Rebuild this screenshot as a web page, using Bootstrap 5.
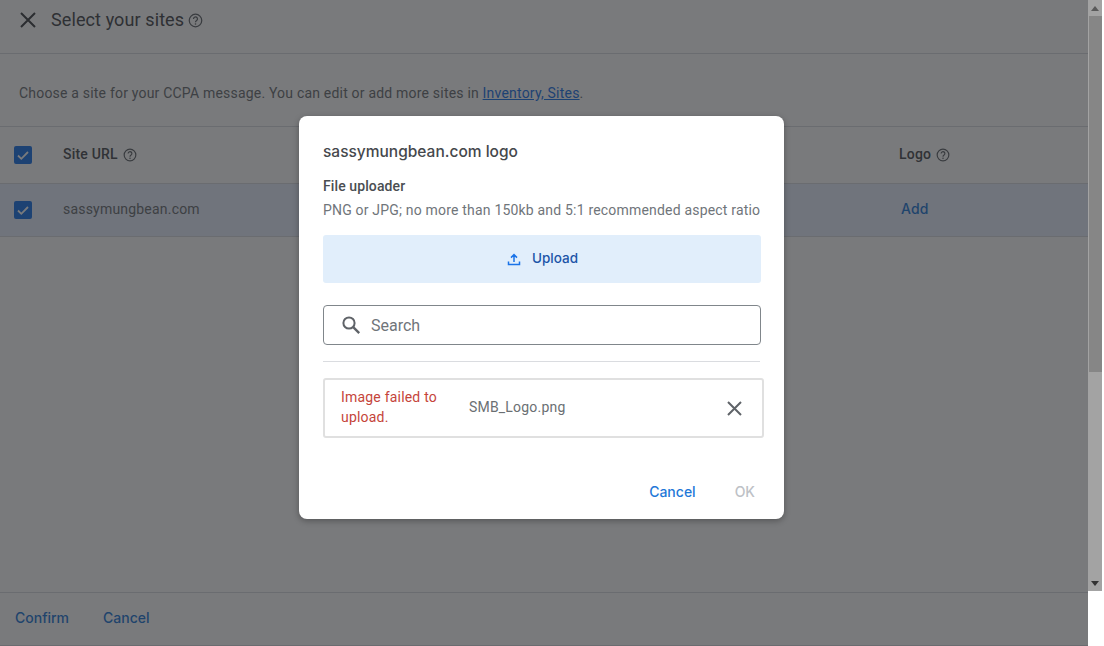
<!DOCTYPE html>
<html lang="en">
<head>
<meta charset="utf-8">
<title>Select your sites</title>
<link href="https://cdn.jsdelivr.net/npm/bootstrap@5.3.0/dist/css/bootstrap.min.css" rel="stylesheet">
<style>
html,body{height:100%;overflow:hidden;background:#fff}
body{font-family:Roboto,"Liberation Sans",sans-serif;color:#3c4043;font-size:14px}
.shell{width:1104px;height:646px}
.pagecol{width:1088px;height:646px;position:relative;background:#fff}
.barcol{width:14px;height:591px;background:#a3a3a3}
.bar-btn{height:16px;color:#3c3c3c}
.bar-thumb{height:356px;background:#868686;margin-left:1px;margin-right:0}
.bar-fill{flex:1 1 auto}
.head-bar{height:54px;border-bottom:1px solid #dadce0;padding-left:20px;padding-bottom:13px}
.head-title{font-size:18px;margin-left:15px;margin-right:4px;color:#45484c;line-height:24px;letter-spacing:.1px}
.intro{height:73px;border-bottom:1px solid #dadce0;padding-left:19px;letter-spacing:.2px;color:#6b6f73;padding-top:7px}
.intro a{color:#1a73e8}
.site-table{table-layout:fixed;width:1088px;margin:0}
.site-table th,.site-table td{border-bottom:1px solid #dadce0;padding:0;vertical-align:middle;color:#6b6f73;font-weight:400;letter-spacing:.2px;box-shadow:none}
.site-table th{height:56px;font-weight:500;color:#4a4d51}
.site-table td{height:53px}
.site-table tr.picked td{--bs-table-bg:#e8f0fe;background:#e8f0fe}
.col-check{width:63px}.col-logo{width:189px}
.help-gap{gap:5px}
.tick{width:18px;height:18px;background:#1a73e8;border-radius:2px;margin-left:14px;display:block}
.add-link,.act-link{color:#1f78d8;font-family:Inter,Roboto,sans-serif;font-size:14px;font-weight:500;text-decoration:none}
.add-link{margin-left:2px;display:inline-block;margin-bottom:2px}
.filler{flex:1 1 auto}
.foot-bar{height:54px;border-top:1px solid #dadce0;padding-left:15px;gap:34px;padding-bottom:3px;border-bottom:1px solid #dadce0}
.scrim{position:absolute;inset:0;background:rgba(32,33,36,.6);padding:116px 0 0 299px}
.dlg{width:485px;height:403px;border:0;border-radius:8px;padding:24px 24px 17px;background:#fff;box-shadow:0 2px 6px rgba(0,0,0,.3)}
.dlg-title{font-family:Inter,Roboto,sans-serif;font-size:15.5px;font-weight:500;line-height:22px;color:#45484c;margin:1px 0 13px}
.dlg-label{font-weight:500;line-height:20px;color:#4a4d51;letter-spacing:.1px}
.dlg-hint{line-height:20px;color:#70757a;letter-spacing:.19px;margin-top:4px;white-space:nowrap}
.up-box{width:438px;height:48px;background:#e1eefb;border:0;border-radius:3px;margin-top:15px;gap:10px;color:#1c55a8;font-weight:500;font-family:Inter,Roboto,sans-serif;font-size:13.5px}
.up-label{margin-bottom:2px}
.find-box{width:438px;height:40px;border:1px solid #80868b;border-radius:4px;margin-top:22px;padding-left:17px;gap:10px}
.find-box input{border:0;outline:0;padding:2px 0 0;flex:1 1 auto;font-size:16px;color:#5f6368;background:transparent;min-width:0}
.find-box input::placeholder{color:#70757a;opacity:1}
.dlg-rule{width:437px;height:1px;background:#dadce0;margin-top:16px}
.file-row{width:441px;height:60px;border:2px solid #e0e0e0;border-radius:3px;margin-top:16px;padding-left:16px;padding-right:20px}
.file-err{width:128px;line-height:20px;color:#c5443a;letter-spacing:.2px;margin-top:-2px}
.file-name{color:#6b6f73;letter-spacing:.2px;margin-top:-2px}
.dlg-foot{margin-top:auto;gap:39px;padding-right:5px;line-height:20px}
.act-off{color:#bdc1c6;font-family:Inter,Roboto,sans-serif;font-size:14px;font-weight:500}
</style>
</head>
<body>
<div class="shell d-flex align-items-start">
  <div class="pagecol d-flex flex-column">
    <header class="head-bar d-flex align-items-center">
      <svg width="16" height="16" viewBox="0 0 16 16" aria-hidden="true"><path d="M1 1l14 14M15 1L1 15" stroke="#3c4043" stroke-width="2" fill="none"/></svg>
      <span class="head-title">Select your sites</span>
      <svg width="15" height="15" viewBox="0 0 24 24" aria-hidden="true"><use href="#qmark"/></svg>
    </header>
    <div class="intro d-flex align-items-center"><span>Choose a site for your CCPA message. You can edit or add more sites in <a href="#">Inventory, Sites</a>.</span></div>
    <table class="table site-table">
      <thead><tr>
        <th class="col-check"><svg class="tick" viewBox="0 0 18 18" aria-hidden="true"><path d="M4 9.5l3.3 3.3L14 6" stroke="#fff" stroke-width="1.8" fill="none"/></svg></th>
        <th><span class="d-inline-flex align-items-center help-gap">Site URL <svg width="14" height="14" viewBox="0 0 24 24" aria-hidden="true"><use href="#qmark"/></svg></span></th>
        <th class="col-logo"><span class="d-inline-flex align-items-center help-gap">Logo <svg width="14" height="14" viewBox="0 0 24 24" aria-hidden="true"><use href="#qmark"/></svg></span></th>
      </tr></thead>
      <tbody><tr class="picked">
        <td><svg class="tick" viewBox="0 0 18 18" aria-hidden="true"><path d="M4 9.5l3.3 3.3L14 6" stroke="#fff" stroke-width="1.8" fill="none"/></svg></td>
        <td>sassymungbean.com</td>
        <td><a href="#" class="add-link">Add</a></td>
      </tr></tbody>
    </table>
    <div class="filler"></div>
    <footer class="foot-bar d-flex align-items-center">
      <a href="#" class="act-link">Confirm</a>
      <a href="#" class="act-link">Cancel</a>
    </footer>
    <div class="scrim">
      <div class="modal-content dlg d-flex flex-column">
        <h2 class="dlg-title">sassymungbean.com logo</h2>
        <div class="dlg-label">File uploader</div>
        <div class="dlg-hint">PNG or JPG; no more than 150kb and 5:1 recommended aspect ratio</div>
        <button type="button" class="btn up-box d-flex align-items-center justify-content-center">
          <svg width="16" height="16" viewBox="0 0 16 16" aria-hidden="true"><path d="M8 11V4M5 6.6L8 3.6l3 3M2.5 10.5v3h11v-3" stroke="#1a73e8" stroke-width="1.5" fill="none"/></svg>
          <span class="up-label">Upload</span>
        </button>
        <div class="find-box d-flex align-items-center">
          <svg width="20" height="20" viewBox="0 0 20 20" aria-hidden="true"><circle cx="8" cy="8" r="5.6" stroke="#5f6368" stroke-width="2" fill="none"/><path d="M12.2 12.2l6 6" stroke="#5f6368" stroke-width="2.4" fill="none"/></svg>
          <input type="text" placeholder="Search" aria-label="Search">
        </div>
        <div class="dlg-rule"></div>
        <div class="file-row d-flex align-items-center">
          <div class="file-err">Image failed to upload.</div>
          <div class="file-name flex-grow-1">SMB_Logo.png</div>
          <svg width="15" height="15" viewBox="0 0 15 15" aria-hidden="true"><path d="M1 1l13 13M14 1L1 14" stroke="#5f6368" stroke-width="2" fill="none"/></svg>
        </div>
        <div class="dlg-foot d-flex justify-content-end">
          <a href="#" class="act-link">Cancel</a>
          <span class="act-off">OK</span>
        </div>
      </div>
    </div>
  </div>
  <div class="barcol d-flex flex-column">
    <div class="bar-btn d-flex align-items-center justify-content-center"><svg width="8" height="5" viewBox="0 0 8 5" aria-hidden="true"><path d="M4 0l4 5H0z" fill="#5a5a5a"/></svg></div>
    <div class="bar-thumb"></div>
    <div class="bar-fill"></div>
    <div class="bar-btn d-flex align-items-center justify-content-center"><svg width="8" height="5" viewBox="0 0 8 5" aria-hidden="true"><path d="M0 0h8L4 5z" fill="#333"/></svg></div>
  </div>
</div>
<svg width="0" height="0" class="d-block" aria-hidden="true"><defs><g id="qmark"><circle cx="12" cy="12" r="10" stroke="#5f6368" stroke-width="2" fill="none"/><path d="M8.8 9.5a3.2 3.2 0 1 1 5 2.6c-1.2.8-1.8 1.4-1.8 2.7" stroke="#5f6368" stroke-width="2" fill="none"/><circle cx="12" cy="17.6" r="1.3" fill="#5f6368"/></g></defs></svg>
<script src="https://cdn.jsdelivr.net/npm/bootstrap@5.3.0/dist/js/bootstrap.bundle.min.js"></script>
</body>
</html>
